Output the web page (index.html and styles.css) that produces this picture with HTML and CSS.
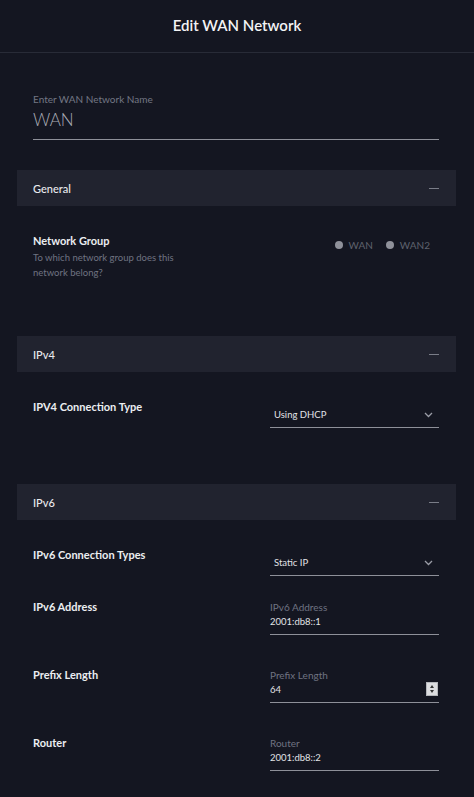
FILE: index.html
```html
<!DOCTYPE html>
<html lang="en">
<head>
    <meta charset="UTF-8">
    <meta name="viewport" content="width=device-width, initial-scale=1.0">
    <title>Edit WAN Network</title>
    <link rel="stylesheet" href="styles.css">
</head>
<body>
    <header class="header">Edit WAN Network</header>

    <div class="name-field">
        <div class="name-label">Enter WAN Network Name</div>
        <div class="name-input">WAN</div>
    </div>

    <section class="section">
        <div class="section-head">
            <span>General</span>
            <span class="minus"></span>
        </div>
        <div class="section-body">
            <div class="row">
                <div class="row-left">
                    <div class="row-title">Network Group</div>
                    <div class="row-sub">To which network group does this<br>network belong?</div>
                </div>
                <div class="radios">
                    <label class="radio"><span class="dot"></span>WAN</label>
                    <label class="radio"><span class="dot"></span>WAN2</label>
                </div>
            </div>
        </div>
    </section>

    <section class="section">
        <div class="section-head">
            <span>IPv4</span>
            <span class="minus"></span>
        </div>
        <div class="section-body">
            <div class="row">
                <div class="row-left">
                    <div class="row-title">IPV4 Connection Type</div>
                </div>
                <div class="select">
                    <span>Using DHCP</span>
                    <svg class="chevron" width="9" height="6" viewBox="0 0 9 6"><path d="M1 1l3.5 3.5L8 1" fill="none" stroke="#9a9ca6" stroke-width="1.3"/></svg>
                </div>
            </div>
        </div>
    </section>

    <section class="section">
        <div class="section-head">
            <span>IPv6</span>
            <span class="minus"></span>
        </div>
        <div class="section-body">
            <div class="row row-tight">
                <div class="row-left">
                    <div class="row-title">IPv6 Connection Types</div>
                </div>
                <div class="select">
                    <span>Static IP</span>
                    <svg class="chevron" width="9" height="6" viewBox="0 0 9 6"><path d="M1 1l3.5 3.5L8 1" fill="none" stroke="#9a9ca6" stroke-width="1.3"/></svg>
                </div>
            </div>
            <div class="row">
                <div class="row-left">
                    <div class="row-title">IPv6 Address</div>
                </div>
                <div class="field">
                    <div class="field-label">IPv6 Address</div>
                    <div class="field-value">2001:db8::1</div>
                </div>
            </div>
            <div class="row">
                <div class="row-left">
                    <div class="row-title">Prefix Length</div>
                </div>
                <div class="field">
                    <div class="field-label">Prefix Length</div>
                    <div class="field-value">
                        <span>64</span>
                        <span class="spinner">
                            <span class="up"></span>
                            <span class="down"></span>
                        </span>
                    </div>
                </div>
            </div>
            <div class="row">
                <div class="row-left">
                    <div class="row-title">Router</div>
                </div>
                <div class="field">
                    <div class="field-label">Router</div>
                    <div class="field-value">2001:db8::2</div>
                </div>
            </div>
        </div>
    </section>
</body>
</html>
```

FILE: styles.css
```css
body {
    margin: 0;
    padding: 0;
    background-color: #141621;
    font-family: Lato, "Open Sans", sans-serif;
    color: #e6e7eb;
}

.header {
    height: 52px;
    line-height: 50px;
    text-align: center;
    font-size: 15px;
    font-weight: 600;
    color: #f3f3f5;
    border-bottom: 1px solid #282b37;
}

.name-field {
    margin: 39px 35px 0 33px;
}

.name-label {
    font-size: 10px;
    line-height: 14px;
    color: #737784;
}

.name-input {
    margin-top: 3px;
    padding-bottom: 8px;
    font-size: 17px;
    line-height: 22px;
    font-weight: 300;
    color: #a9abb4;
    border-bottom: 1px solid #8e9099;
}

.section {
    margin: 0 18px 0 17px;
}

.name-field + .section {
    margin-top: 30px;
}

.section-head {
    display: flex;
    align-items: center;
    justify-content: space-between;
    height: 36px;
    padding: 0 17px 0 16px;
    background-color: #21232f;
    font-size: 11px;
    font-weight: 500;
    color: #e9eaee;
}

.minus {
    width: 10px;
    height: 1px;
    background-color: #7a7d88;
}

.section-body {
    padding: 27px 17px 56px 16px;
}

.row {
    display: flex;
    justify-content: space-between;
    align-items: flex-start;
}

.row + .row {
    margin-top: 32px;
}

.row-tight + .row {
    margin-top: 23px;
}

.row-left {
    width: 200px;
}

.row-title {
    font-size: 11px;
    line-height: 16px;
    font-weight: 700;
    color: #eceef1;
}

.row-sub {
    margin-top: 1px;
    font-size: 9.5px;
    line-height: 15px;
    color: #6f7381;
}

.radios {
    display: flex;
    gap: 13px;
    margin-top: 5px;
    margin-right: 9px;
}

.radio {
    display: flex;
    align-items: center;
    gap: 6px;
    font-size: 10px;
    line-height: 14px;
    color: #5f626d;
}

.dot {
    width: 8px;
    height: 8px;
    border-radius: 50%;
    background-color: #8f919a;
}

.select {
    display: flex;
    align-items: center;
    justify-content: space-between;
    box-sizing: border-box;
    width: 169px;
    margin-top: 8px;
    padding: 0 6px 4px 4px;
    font-size: 9.5px;
    line-height: 16px;
    color: #e2e3e7;
    border-bottom: 1px solid #8e9099;
}

.field {
    width: 169px;
    margin-top: 1px;
    border-bottom: 1px solid #8e9099;
}

.field-label {
    font-size: 10px;
    line-height: 14px;
    color: #6f7381;
}

.field-value {
    display: flex;
    align-items: center;
    justify-content: space-between;
    padding: 0 1px 4px 0;
    font-size: 9.5px;
    line-height: 16px;
    color: #e2e3e7;
}

.spinner {
    display: flex;
    flex-direction: column;
    justify-content: center;
    align-items: center;
    gap: 2px;
    width: 12px;
    height: 14px;
    margin-top: -2px;
    background-color: #dcdde0;
    border: 1px solid #b4b6bb;
    box-sizing: border-box;
}

.up,
.down {
    width: 0;
    height: 0;
    border-left: 2.5px solid transparent;
    border-right: 2.5px solid transparent;
}

.up {
    border-bottom: 3px solid #333;
}

.down {
    border-top: 3px solid #333;
}
```
